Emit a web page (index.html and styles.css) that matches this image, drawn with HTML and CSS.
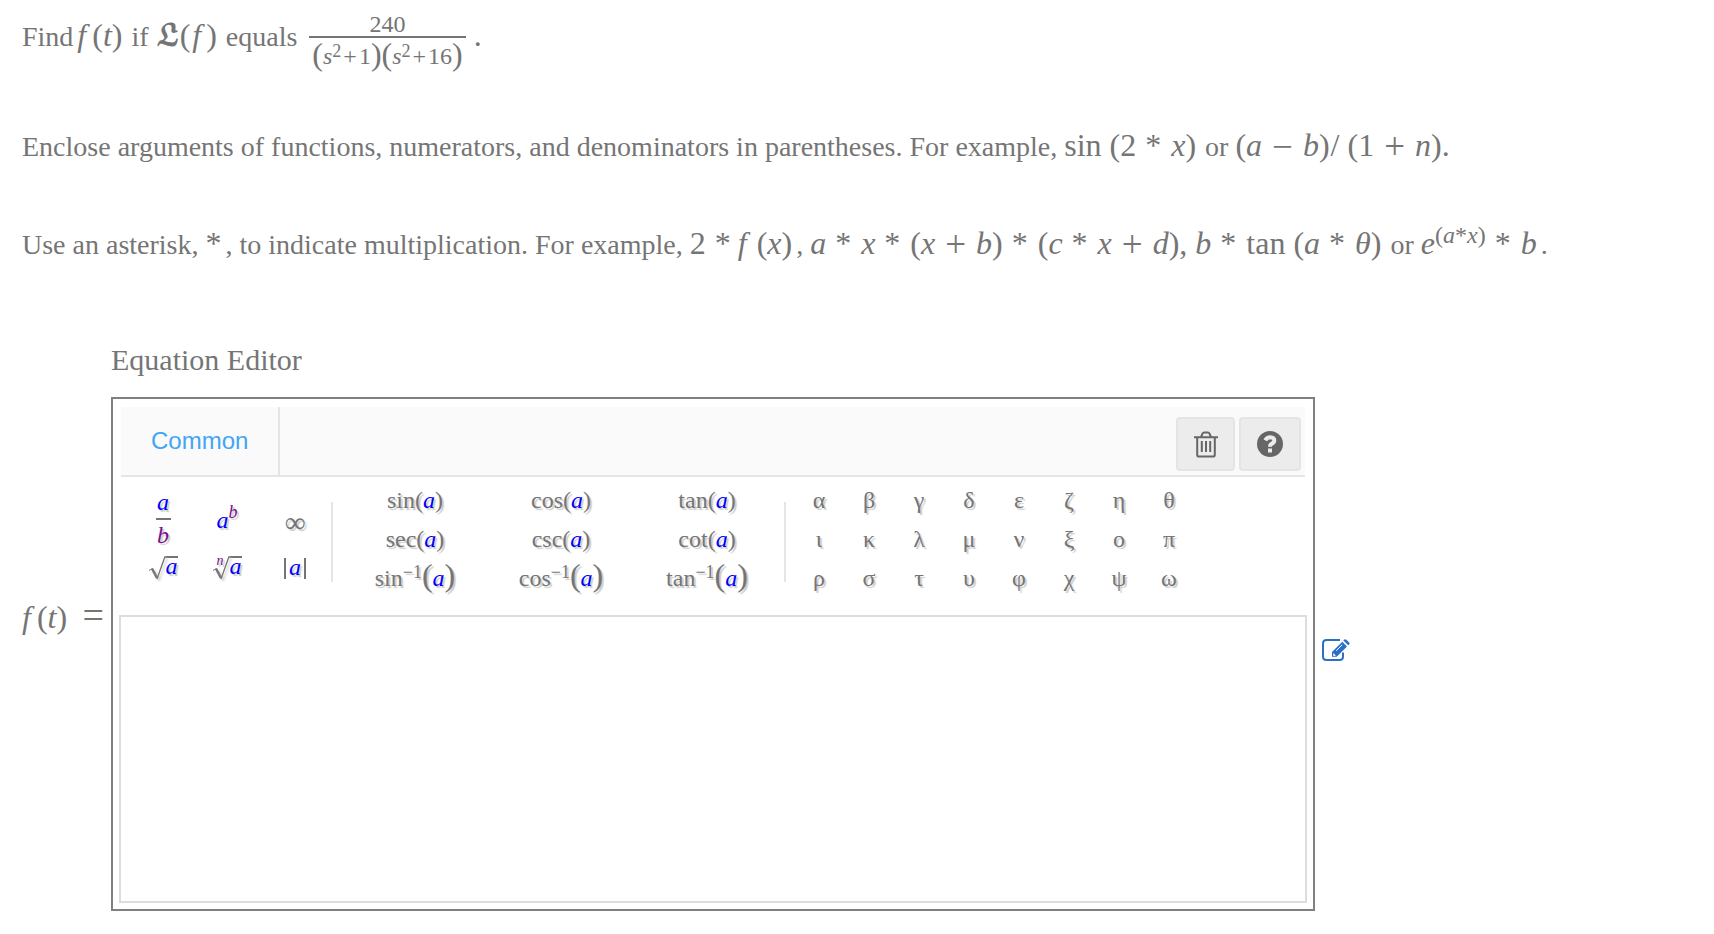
FILE: index.html
```html
<!DOCTYPE html>
<html lang="en">
<head>
<meta charset="utf-8">
<title>Inverse Laplace transform</title>
<link rel="stylesheet" href="styles.css">
</head>
<body>
<main class="question">
  <p class="line">Find <span class="math"><i class="fn">f</i>(<i>t</i>)</span> if <span class="math"><span class="fraktur">𝔏</span>(<i class="arg">f</i>)</span> equals <span class="frac"><span class="num">240</span><span class="den"><span class="tall">(</span><i>s</i><sup>2</sup><span class="plus">+</span>1<span class="tall">)</span><span class="tall">(</span><i>s</i><sup>2</sup><span class="plus">+</span>16<span class="tall">)</span></span></span><span class="math"> .</span></p>
  <p class="line">Enclose arguments of functions, numerators, and denominators in parentheses. For example, <span class="math">sin<span class="open">(</span>2<span class="op">*</span><i>x</i>)</span> or <span class="math">(<i>a</i><span class="op sign">−</span><i>b</i>)<span class="slash">/</span><span class="open">(</span>1<span class="op sign">+</span><i>n</i>).</span></p>
  <p class="line">Use an asterisk, <span class="math">*</span><span class="comma">,</span> to indicate multiplication. For example, <span class="math">2<span class="op">*</span><i class="fn">f</i><span class="open">(</span><i>x</i>)</span><span class="comma">,</span> <span class="math"><i>a</i><span class="op">*</span><i>x</i><span class="op">*</span>(<i>x</i><span class="op sign">+</span><i>b</i>)<span class="op">*</span>(<i>c</i><span class="op">*</span><i>x</i><span class="op sign">+</span><i>d</i>), <i>b</i><span class="op">*</span>tan<span class="open">(</span><i>a</i><span class="op">*</span><i>θ</i>)</span> or <span class="math"><i>e</i><sup>(<i>a</i>*<i>x</i>)</sup><span class="op">*</span><i>b</i></span><span class="comma">.</span></p>

  <section class="answer">
    <label class="lhs math" for="equation"><span><i class="fn">f</i>(<i>t</i>)</span><span class="equals">=</span></label>
    <div class="column">
      <h2 class="title">Equation Editor</h2>
      <div class="editor">
        <div class="tabs">
          <button class="tab" type="button">Common</button>
          <div class="tools">
            <button class="tool trash" type="button" aria-label="Clear">
              <svg width="24" height="27" viewBox="0 0 24 27" fill="none" stroke="#666" stroke-width="2">
                <path d="M0 6.3H24M7 6L8.5 2.6Q9 1.4 10.2 1.4H13.8Q15 1.4 15.5 2.6L17 6M3.2 6V23.4Q3.2 25.6 5.2 25.6H18.8Q20.8 25.6 20.8 23.4V6M7.8 10V21M12 10V21M16.2 10V21"/>
              </svg>
            </button>
            <button class="tool help" type="button" aria-label="Help">
              <svg width="26" height="26" viewBox="0 0 26 26">
                <circle cx="13" cy="13" r="13" fill="#666"/>
                <path d="M8.3 9.4Q10 6.3 13.2 6.3Q17.3 6.5 17.3 9.5Q17.3 11.4 14.9 12.6Q13 13.6 13 15.8" fill="none" stroke="#ececec" stroke-width="4"/>
                <path d="M11 17.5H15V21.5H11Z" fill="#ececec"/>
              </svg>
            </button>
          </div>
        </div>
        <div class="palette">
          <div class="group basics">
            <button class="key stack" type="button" aria-label="Fraction"><i class="a">a</i><span class="bar"></span><i class="b">b</i></button>
            <button class="key power" type="button"><i class="a">a</i><sup><i class="b">b</i></sup></button>
            <button class="key low" type="button"><span class="infinity">∞</span></button>
            <button class="key" type="button" aria-label="Square root">
              <svg class="root" width="17" height="24" viewBox="0 0 17 24" fill="none" stroke="#757575"><path d="M0 14.5L3.5 12.5" stroke-width="1"/><path d="M3 12.5L8 22" stroke-width="2.4"/><path d="M8 23L15.8 1H17" stroke-width="1.3"/></svg><i class="a radicand">a</i>
            </button>
            <button class="key" type="button" aria-label="Nth root">
              <span class="index"><svg class="root" width="17" height="24" viewBox="0 0 17 24" fill="none" stroke="#757575"><path d="M0 14.5L3.5 12.5" stroke-width="1"/><path d="M3 12.5L8 22" stroke-width="2.4"/><path d="M8 23L15.8 1H17" stroke-width="1.3"/></svg><i class="b n">n</i></span><i class="a radicand">a</i>
            </button>
            <button class="key" type="button"><span class="abs"><i class="a">a</i></span></button>
          </div>
          <div class="rule"></div>
          <div class="group trig">
            <button class="key" type="button">sin(<i class="a">a</i>)</button>
            <button class="key" type="button">cos(<i class="a">a</i>)</button>
            <button class="key" type="button">tan(<i class="a">a</i>)</button>
            <button class="key" type="button">sec(<i class="a">a</i>)</button>
            <button class="key" type="button">csc(<i class="a">a</i>)</button>
            <button class="key" type="button">cot(<i class="a">a</i>)</button>
            <button class="key" type="button">sin<sup>−1</sup><span class="tall">(</span><i class="a">a</i><span class="tall">)</span></button>
            <button class="key" type="button">cos<sup>−1</sup><span class="tall">(</span><i class="a">a</i><span class="tall">)</span></button>
            <button class="key" type="button">tan<sup>−1</sup><span class="tall">(</span><i class="a">a</i><span class="tall">)</span></button>
          </div>
          <div class="rule"></div>
          <div class="group greek">
            <button class="key" type="button">α</button><button class="key" type="button">β</button><button class="key" type="button">γ</button><button class="key" type="button">δ</button><button class="key" type="button">ε</button><button class="key" type="button">ζ</button><button class="key" type="button">η</button><button class="key" type="button">θ</button>
            <button class="key" type="button">ι</button><button class="key" type="button">κ</button><button class="key" type="button">λ</button><button class="key" type="button">μ</button><button class="key" type="button">ν</button><button class="key" type="button">ξ</button><button class="key" type="button">ο</button><button class="key" type="button">π</button>
            <button class="key" type="button">ρ</button><button class="key" type="button">σ</button><button class="key" type="button">τ</button><button class="key" type="button">υ</button><button class="key" type="button">φ</button><button class="key" type="button">χ</button><button class="key" type="button">ψ</button><button class="key" type="button">ω</button>
          </div>
        </div>
        <textarea class="input" id="equation"></textarea>
      </div>
    </div>
    <button class="edit" type="button" aria-label="Edit equation">
      <svg width="28" height="22" viewBox="0 0 28 22">
        <path d="M18 1H4.5Q1 1 1 4.5V17.5Q1 21 4.5 21H17.5Q21 21 21 17.5V13.5" fill="none" stroke="#2a6fc9" stroke-width="2"/>
        <path d="M10 13L20.3 2.7L25 7.4L14.7 17.7H10Z" fill="#2a6fc9"/>
        <path d="M21.4 1.6L22.4 .6Q23.3 -.2 24.3 .7L27.2 3.5Q28 4.5 27.1 5.4L26.1 6.3Z" fill="#2a6fc9"/>
        <path d="M11.3 14L13.8 16.4L12.7 17H11.3Z" fill="#fff"/>
        <path d="M14.2 11.8L20.2 5.8" stroke="#fff" stroke-width="1"/>
      </svg>
    </button>
  </section>
</main>
</body>
</html>
```
FILE: styles.css
```css
* {
  box-sizing: border-box;
}

body {
  margin: 0;
  background: #fff;
  color: #757575;
  font-family: "Liberation Serif", "Times New Roman", serif;
  font-size: 28px;
}

.question {
  padding: 12px 22px 21px;
}

.line {
  margin: 0 0 56px;
  line-height: 40px;
}

.line:first-child {
  margin-bottom: 51px;
}

sup {
  font-size: 18px;
  line-height: 0;
  vertical-align: 7px;
}

.math {
  margin-right: 2px;
  font-size: 32px;
}

.math sup {
  font-size: 24px;
  vertical-align: 11px;
}

.fn {
  margin: 0 6px 0 -3px;
}

.arg {
  margin: 0 5px 0 2px;
}

.open {
  margin-left: 8px;
}

.fn + .open {
  margin-left: 4px;
}

.op {
  margin: 0 10px 0 9px;
}

.sign {
  margin: 0 10px;
  font-size: 37px;
  line-height: 0;
  vertical-align: -3px;
}

.slash {
  margin-left: 1px;
}

.comma {
  margin-left: 2px;
}

.fraktur {
  font-family: "DejaVu Math TeX Gyre", "DejaVu Sans", serif;
  font-size: 28px;
  font-weight: 700;
  line-height: 0;
}

.frac {
  display: inline-block;
  margin: 0 0 0 5px;
  font-size: 24px;
  text-align: center;
  vertical-align: -18px;
}

.num,
.den {
  display: block;
  padding: 0 3px;
}

.num {
  line-height: 24px;
  border-bottom: 2px solid #757575;
}

.den {
  line-height: 36px;
}

.plus {
  margin: 0 2px;
}

.tall {
  font-size: 32px;
  line-height: 0;
  vertical-align: -1px;
}

.answer {
  display: flex;
  align-items: center;
  margin-top: 74px;
}

.lhs {
  display: flex;
  flex: none;
  align-items: baseline;
  justify-content: space-between;
  width: 89px;
  margin: 0;
  padding: 0 7px 18px 3px;
  line-height: 40px;
}

.equals {
  font-size: 38px;
}

.column {
  flex: 0 1 1204px;
}

.title {
  margin: 0 0 17px;
  padding-top: 1px;
  font-size: 30px;
  font-weight: 400;
  line-height: 40px;
}

.editor {
  padding: 8px 6px 6px;
  border: 2px solid #808080;
}

.tabs {
  display: flex;
  justify-content: space-between;
  height: 70px;
  margin: 0 2px;
  background: #fafafa;
  border-bottom: 2px solid #e5e5e5;
}

.tab {
  padding: 0 30px;
  border: 0;
  border-right: 2px solid #e5e5e5;
  background: none;
  color: #42a5f5;
  font: 24px "Liberation Sans", Arial, sans-serif;
}

.tools {
  display: flex;
  gap: 4px;
  padding: 10px 4px 4px;
}

.tool {
  display: flex;
  align-items: center;
  justify-content: center;
  padding: 0;
  border: 2px solid #e4e4e4;
  border-radius: 4px;
  background: #ececec;
}

.trash {
  width: 59px;
}

.help {
  width: 62px;
}

.palette {
  display: flex;
  height: 138px;
  margin: 0 2px;
}

.group {
  display: grid;
  align-content: start;
  text-shadow: 2px 2px 1px #ccc;
}

.basics {
  grid-template: 62px 36px / 64px 64px 72px;
  padding: 11px 0 0 10px;
}

.trig {
  grid-template: repeat(3, 39px) / repeat(3, 146px);
  padding: 4px 4px 0 9px;
}

.greek {
  grid-template: repeat(3, 39px) / repeat(8, 50px);
  padding: 4px 0 0 8px;
}

.rule {
  width: 2px;
  height: 80px;
  margin-top: 25px;
  background: #e5e5e5;
}

.key {
  display: flex;
  align-items: baseline;
  justify-content: center;
  padding: 0;
  border: 0;
  background: none;
  color: inherit;
  font: 24px/39px "Liberation Serif", "Times New Roman", serif;
  text-shadow: inherit;
}

.basics .key {
  line-height: 36px;
}

.basics .low {
  padding-top: 16px;
}

.basics .power {
  padding-top: 14px;
}

.key sup {
  align-self: flex-start;
  font-size: 18px;
  line-height: 26px;
}

.power sup {
  line-height: 20px;
}

.a {
  color: #0000fa;
}

.b {
  color: #7b0f8a;
}

.basics .stack {
  flex-direction: column;
  align-items: center;
  justify-content: flex-start;
  line-height: 28px;
}

.bar {
  width: 15px;
  height: 2px;
  margin: 2px 0 1px;
  background: #757575;
}

.infinity {
  font-size: 29px;
}

.root {
  display: block;
  filter: drop-shadow(2px 2px 1px #ccc);
}

.index {
  position: relative;
}

.n {
  position: absolute;
  top: -2px;
  left: 4px;
  font-size: 14px;
  line-height: 14px;
}

.radicand {
  height: 24px;
  border-top: 2px solid #757575;
  line-height: 16px;
}

.basics .key:has(.root) {
  align-items: center;
}

.abs {
  height: 21px;
  align-self: center;
  padding: 0 3px;
  border: solid #757575;
  border-width: 0 2px;
  line-height: 18px;
}

.input {
  display: block;
  width: 100%;
  height: 288px;
  padding: 12px;
  border: 2px solid #ddd;
  background: #fff;
  color: inherit;
  font: inherit;
  resize: none;
}

.edit {
  flex: none;
  margin: 50px 0 0 7px;
  padding: 0;
  border: 0;
  background: none;
}

.edit svg {
  display: block;
}
```
